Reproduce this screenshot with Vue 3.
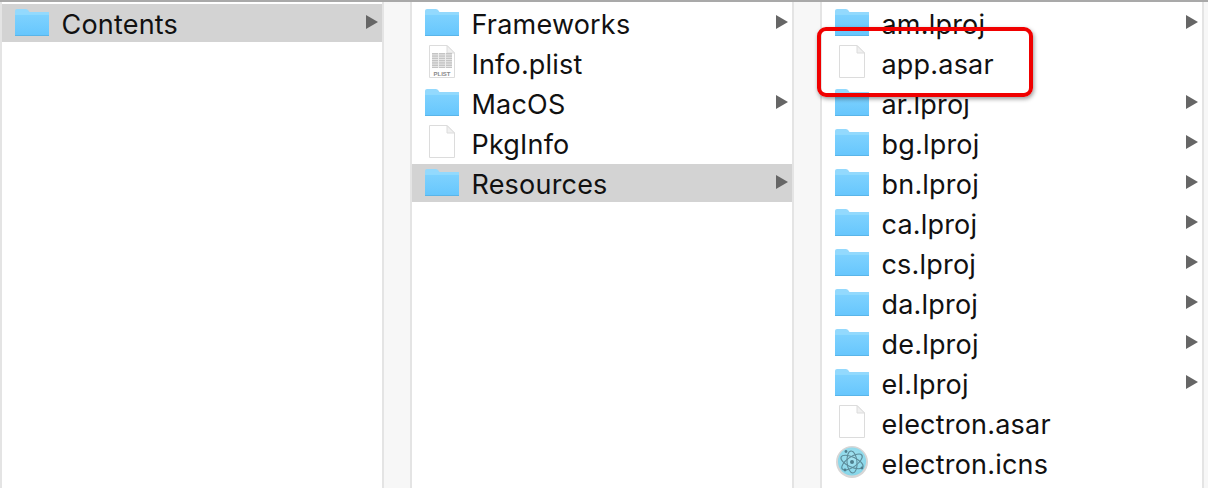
<script setup>
const columns = [
  [{ name: 'Contents', icon: 'folder', arrow: true, selected: true }],
  [
    { name: 'Frameworks', icon: 'folder', arrow: true },
    { name: 'Info.plist', icon: 'plist' },
    { name: 'MacOS', icon: 'folder', arrow: true },
    { name: 'PkgInfo', icon: 'file' },
    { name: 'Resources', icon: 'folder', arrow: true, selected: true },
  ],
  [
    { name: 'am.lproj', icon: 'folder', arrow: true },
    { name: 'app.asar', icon: 'file' },
    { name: 'ar.lproj', icon: 'folder', arrow: true },
    { name: 'bg.lproj', icon: 'folder', arrow: true },
    { name: 'bn.lproj', icon: 'folder', arrow: true },
    { name: 'ca.lproj', icon: 'folder', arrow: true },
    { name: 'cs.lproj', icon: 'folder', arrow: true },
    { name: 'da.lproj', icon: 'folder', arrow: true },
    { name: 'de.lproj', icon: 'folder', arrow: true },
    { name: 'el.lproj', icon: 'folder', arrow: true },
    { name: 'electron.asar', icon: 'file' },
    { name: 'electron.icns', icon: 'electron' },
  ],
]
const plistLines = [0, 1, 2, 3, 4, 5]
</script>

<template>
  <div class="browser">
    <div v-for="(col, c) in columns" :key="c" class="column">
      <div v-for="item in col" :key="item.name" class="row" :class="{ selected: item.selected }">
        <svg class="icon" width="60" height="38" viewBox="0 0 60 38">
          <defs>
            <linearGradient :id="`fold${c}${item.name}`" x1="0" y1="0" x2="0" y2="1">
              <stop offset="0" stop-color="#7fd2fe" />
              <stop offset="1" stop-color="#66c6fd" />
            </linearGradient>
            <radialGradient :id="`el${c}`" cx="0.5" cy="0.4" r="0.65">
              <stop offset="0" stop-color="#a8e4f1" />
              <stop offset="1" stop-color="#82d4e8" />
            </radialGradient>
          </defs>
          <g v-if="item.icon === 'folder'">
            <path d="M13 7 Q13 5 15 5 H24 Q26 5 27.5 8 H47 V11 H13 Z" fill="#93d9fd" />
            <path d="M13 10 H46 Q47 10 47 11 V31 Q47 32 46 32 H14 Q13 32 13 31 Z" :fill="`url(#fold${c}${item.name})`" />
            <rect x="13" y="31" width="34" height="1" fill="#5ab5e8" />
            <rect x="13" y="10" width="34" height="1" fill="#8fdafe" />
          </g>
          <g v-else-if="item.icon === 'file' || item.icon === 'plist'">
            <path d="M17.5 1.5 H35 L42.5 9 V33.5 H17.5 Z" fill="#fff" stroke="#dcdcdc" />
            <path d="M35 1.5 V9 H42.5 Z" fill="#f0f0f0" stroke="#dcdcdc" />
          </g>
          <g v-if="item.icon === 'plist'">
            <rect x="20" y="9" width="20" height="15" fill="#c4c4c4" />
            <rect v-for="n in plistLines" :key="n" x="20" :y="10.5 + n * 2.3" width="20" height="0.8" fill="#eeeeee" />
            <rect x="26" y="9" width="1" height="15" fill="#eee" />
            <rect x="33" y="9" width="1" height="15" fill="#eee" />
            <text x="30" y="32" class="plist-label">PLIST</text>
          </g>
          <g v-if="item.icon === 'electron'">
            <circle cx="30" cy="18" r="16" fill="#d6d6d6" />
            <circle cx="30" cy="17.5" r="14" :fill="`url(#el${c})`" />
            <g fill="none" stroke="#5c8b99" stroke-width="1.1">
              <ellipse cx="30" cy="18" rx="12" ry="5" transform="rotate(25 30 18)" />
              <ellipse cx="30" cy="18" rx="12" ry="5" transform="rotate(-35 30 18)" />
              <ellipse cx="30" cy="18" rx="11" ry="5" transform="rotate(85 30 18)" />
            </g>
            <circle cx="30" cy="18" r="2" fill="#4f7f8e" />
            <circle cx="24" cy="7.5" r="1.4" fill="#4f7f8e" />
            <circle cx="40" cy="24" r="1.4" fill="#4f7f8e" />
            <circle cx="23" cy="26" r="1.4" fill="#4f7f8e" />
          </g>
        </svg>
        <span class="name">{{ item.name }}</span>
        <span v-if="item.arrow" class="arrow"></span>
      </div>
    </div>
    <div class="highlight"></div>
  </div>
</template>

<style scoped>
.browser {
  position: relative;
  display: flex;
  width: 1208px;
  height: 488px;
  box-sizing: border-box;
  overflow: hidden;
  border-top: 2px solid #a9a9a9;
  padding-left: 2px;
  background: #f7f7f7;
  box-shadow: inset 2px 0 0 #e4e4e4;
  font-family: Inter, "Liberation Sans", sans-serif;
}
.column {
  flex: none;
  width: 380px;
  padding-top: 2px;
  margin-right: 30px;
  background: #fff;
  box-shadow: 2px 0 0 #e4e4e4, -2px 0 0 #e4e4e4;
}
.row {
  position: relative;
  display: flex;
  align-items: center;
  height: 38px;
  margin-bottom: 2px;
}
.row.selected {
  background: #d3d3d3;
}
.icon {
  flex: none;
  display: block;
}
.name {
  font-size: 27px;
  letter-spacing: 0.2px;
  line-height: 34px;
  padding-top: 4px;
  margin-left: -0.5px;
  color: #111;
  white-space: nowrap;
}
.arrow {
  position: absolute;
  right: 4px;
  top: 11px;
  width: 0;
  height: 0;
  border-left: 12px solid #666;
  border-top: 7px solid transparent;
  border-bottom: 7px solid transparent;
}
.plist-label {
  font-family: "Liberation Sans", sans-serif;
  font-size: 6px;
  font-weight: 700;
  fill: #888;
  text-anchor: middle;
}
.highlight {
  position: absolute;
  left: 817px;
  top: 25px;
  width: 216px;
  height: 70px;
  box-sizing: border-box;
  border: 4px solid #f00000;
  border-radius: 9px;
  box-shadow: 1px 2px 4px rgba(0, 0, 0, 0.4);
}
</style>
